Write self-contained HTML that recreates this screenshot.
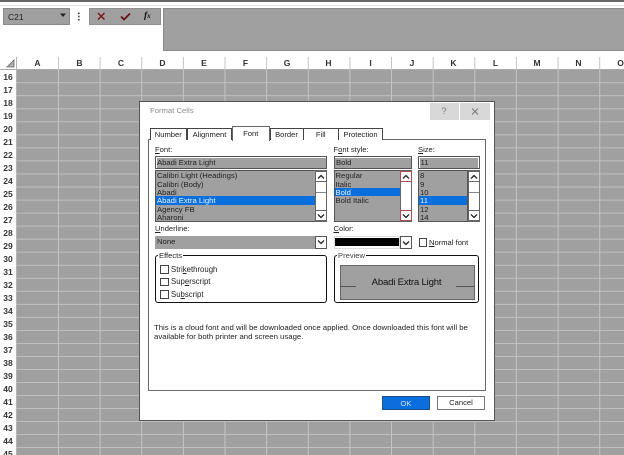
<!DOCTYPE html>
<html><head><meta charset="utf-8"><style>
html,body{margin:0;padding:0;width:624px;height:455px;overflow:hidden;background:#fff}
#r{position:relative;width:624px;height:455px;overflow:hidden;font-family:"Liberation Sans",sans-serif;font-size:7.6px;color:#222;filter:blur(.25px)}
#r div{position:absolute;box-sizing:border-box}
.t{white-space:nowrap;line-height:10px;height:10px}
.c{text-align:center}
.g{background:#a0a0a0}
.h{font-size:8.5px;color:#333;font-weight:bold;top:58px;width:41px;text-align:center;line-height:11px;height:11px}
.n{left:0;width:16px;text-align:center;font-size:8.5px;color:#333;font-weight:bold;line-height:11px;height:11px}
.tab{background:#fff;border:1px solid #444;border-bottom:none;text-align:center;top:127.5px;height:12px;line-height:11.5px;font-size:7.6px}
.li{left:157px;font-size:7.7px;line-height:9px;height:9px;color:#222;white-space:nowrap}
.sb{background:#fff;border:1px solid #666}
.cb{width:8.5px;height:8.5px;border:1px solid #444;background:#fff}
u{text-decoration:underline}
</style></head><body><div id="r">
<div style="left:0;top:0;width:624px;height:2px;background:#666"></div>
<div style="left:0;top:2px;width:624px;height:4px;background:#fff;border-bottom:1px solid #ddd"></div>

<div class="g" style="left:3px;top:8px;width:67px;height:17px;border:1px solid #8a8a8a"></div>
<div class="t" style="left:8px;top:11.5px;font-size:8.5px">C21</div>
<svg style="position:absolute;left:60px;top:13px" width="6" height="5"><path d="M0 0.5H6L3 4z" fill="#222"/></svg>
<svg style="position:absolute;left:77px;top:12px" width="4" height="10"><rect x="1" y="0.5" width="1.6" height="1.6" fill="#444"/><rect x="1" y="3.7" width="1.6" height="1.6" fill="#444"/><rect x="1" y="6.9" width="1.6" height="1.6" fill="#444"/></svg>
<div class="g" style="left:89px;top:8px;width:72px;height:17px;border:1px solid #8f8f8f"></div>
<svg style="position:absolute;left:97px;top:12px" width="9" height="9"><path d="M1 1L7.5 7.5M7.5 1L1 7.5" stroke="#7a1a1a" stroke-width="1.5"/></svg>
<svg style="position:absolute;left:120px;top:12px" width="11" height="9"><path d="M1 4.5L4 7.5L10 1.5" stroke="#6a1010" stroke-width="1.7" fill="none"/></svg>
<div class="t" style="left:144px;top:11px;font-family:'Liberation Serif',serif;font-style:italic;font-weight:bold;font-size:9.5px;color:#111">f<span style="font-size:7px">x</span></div>
<div class="g" style="left:163px;top:8px;width:461px;height:43px;border:1px solid #8a8a8a;border-right:none"></div>

<!-- column headers -->
<svg style="position:absolute;left:0;top:0" width="624" height="455">
<rect x="0" y="69" width="624" height="1.5" fill="#aaa"/>
<rect x="16" y="70" width="608" height="385" fill="#a0a0a0"/>
<g fill="#c4c4c4">
<rect x="16" y="57" width="1" height="398" fill="#b4b4b4"/>
<rect x="58" y="57" width="1" height="398"/><rect x="99.6" y="57" width="1" height="398"/><rect x="141.2" y="57" width="1" height="398"/><rect x="182.9" y="57" width="1" height="398"/><rect x="224.5" y="57" width="1" height="398"/><rect x="266.1" y="57" width="1" height="398"/><rect x="307.8" y="57" width="1" height="398"/><rect x="349.4" y="57" width="1" height="398"/><rect x="391" y="57" width="1" height="398"/><rect x="432.7" y="57" width="1" height="398"/><rect x="474.3" y="57" width="1" height="398"/><rect x="515.9" y="57" width="1" height="398"/><rect x="557.6" y="57" width="1" height="398"/><rect x="599.2" y="57" width="1" height="398"/>
</g>
<g fill="#c0c0c0">
<rect x="0" y="82.2" width="624" height="1"/><rect x="0" y="95.2" width="624" height="1"/><rect x="0" y="108.3" width="624" height="1"/><rect x="0" y="121.3" width="624" height="1"/><rect x="0" y="134.4" width="624" height="1"/><rect x="0" y="147.4" width="624" height="1"/><rect x="0" y="160.4" width="624" height="1"/><rect x="0" y="173.5" width="624" height="1"/><rect x="0" y="186.5" width="624" height="1"/><rect x="0" y="199.6" width="624" height="1"/><rect x="0" y="212.6" width="624" height="1"/><rect x="0" y="225.6" width="624" height="1"/><rect x="0" y="238.7" width="624" height="1"/><rect x="0" y="251.7" width="624" height="1"/><rect x="0" y="264.8" width="624" height="1"/><rect x="0" y="277.8" width="624" height="1"/><rect x="0" y="290.8" width="624" height="1"/><rect x="0" y="303.9" width="624" height="1"/><rect x="0" y="316.9" width="624" height="1"/><rect x="0" y="330" width="624" height="1"/><rect x="0" y="343" width="624" height="1"/><rect x="0" y="356" width="624" height="1"/><rect x="0" y="369" width="624" height="1"/><rect x="0" y="382" width="624" height="1"/><rect x="0" y="395" width="624" height="1"/><rect x="0" y="408" width="624" height="1"/><rect x="0" y="421" width="624" height="1"/><rect x="0" y="434" width="624" height="1"/><rect x="0" y="447" width="624" height="1"/>
</g>
<rect x="0" y="70" width="16" height="385" fill="#fff" opacity=".93"/>
<path d="M14 60V67H7z" fill="#b0b0b0" stroke="#666" stroke-width=".8"/>
</svg>

<div class="h" style="left:17px">A</div><div class="h" style="left:59px">B</div><div class="h" style="left:100.5px">C</div><div class="h" style="left:142px">D</div><div class="h" style="left:183.5px">E</div><div class="h" style="left:225px">F</div><div class="h" style="left:266.5px">G</div><div class="h" style="left:308px">H</div><div class="h" style="left:350px">I</div><div class="h" style="left:391.5px">J</div><div class="h" style="left:433px">K</div><div class="h" style="left:475px">L</div><div class="h" style="left:516.5px">M</div><div class="h" style="left:558px">N</div><div class="h" style="left:600px">O</div>

<div class="n" style="top:71.5px">16</div><div class="n" style="top:84.5px">17</div><div class="n" style="top:97.5px">18</div><div class="n" style="top:110.5px">19</div><div class="n" style="top:123.5px">20</div><div class="n" style="top:136.5px">21</div><div class="n" style="top:149.5px">22</div><div class="n" style="top:162.5px">23</div><div class="n" style="top:175.5px">24</div><div class="n" style="top:188.5px">25</div><div class="n" style="top:201.5px">26</div><div class="n" style="top:214.5px">27</div><div class="n" style="top:227.5px">28</div><div class="n" style="top:240.5px">29</div><div class="n" style="top:253.5px">30</div><div class="n" style="top:266.5px">31</div><div class="n" style="top:279.5px">32</div><div class="n" style="top:292.5px">33</div><div class="n" style="top:305.5px">34</div><div class="n" style="top:318.5px">35</div><div class="n" style="top:331.5px">36</div><div class="n" style="top:345px">37</div><div class="n" style="top:358px">38</div><div class="n" style="top:371px">39</div><div class="n" style="top:384px">40</div><div class="n" style="top:397px">41</div><div class="n" style="top:410px">42</div><div class="n" style="top:423px">43</div><div class="n" style="top:436px">44</div><div class="n" style="top:449px">45</div>

<!-- dialog -->
<div style="left:139px;top:100.5px;width:356px;height:320px;background:#fff;border:1px solid #555"></div>
<div class="t" style="left:150px;top:106px;color:#8a8a8a;font-size:7.7px">Format Cells</div>
<div style="left:429.5px;top:103px;width:29px;height:17px;background:#d8d8d8"></div>
<div class="t c" style="left:429.5px;top:106px;width:29px;color:#777;font-size:9px">?</div>
<div style="left:460px;top:103px;width:29.5px;height:17px;background:#d8d8d8"></div>
<svg style="position:absolute;left:471px;top:108px" width="8" height="7"><path d="M1 .5L7 6.5M7 .5L1 6.5" stroke="#777" stroke-width="1"/></svg>

<!-- panel -->
<div style="left:148px;top:139px;width:337.5px;height:251.5px;background:#fff;border:1px solid #6a6a6a"></div>
<div class="tab" style="left:149.5px;width:37.5px">Number</div>
<div class="tab" style="left:187px;width:45px">Alignment</div>
<div class="tab" style="left:232px;width:37.5px;top:125.5px;height:15px;line-height:13.5px;border-color:#666;z-index:2">Font</div>
<div class="tab" style="left:269.5px;width:34px">Border</div>
<div class="tab" style="left:303px;width:35.5px">Fill</div>
<div class="tab" style="left:338px;width:45px">Protection</div>

<!-- Font -->
<div class="t" style="left:155px;top:145px"><u>F</u>ont:</div>
<div style="left:155px;top:156px;width:172px;height:13px;border:1px solid #555;background:#fff;padding:1px"></div>
<div class="g" style="left:156.5px;top:157.5px;width:169px;height:10px"></div>
<div class="t" style="left:157px;top:158px;font-size:7.7px">Abadi Extra Light</div>
<div class="g" style="left:155px;top:170px;width:161px;height:52px;border:1px solid #555"></div>
<div style="left:156px;top:196px;width:159px;height:8.5px;background:#0a6fdc"></div>
<div class="li" style="top:171px">Calibri Light (Headings)</div>
<div class="li" style="top:179.5px">Calibri (Body)</div>
<div class="li" style="top:188px">Abadi</div>
<div class="li" style="top:196px;color:#eaf2ff">Abadi Extra Light</div>
<div class="li" style="top:204.5px">Agency FB</div>
<div class="li" style="top:213px">Aharoni</div>
<div style="left:315px;top:170px;width:12px;height:52px;background:#fff;border:1px solid #666"></div>
<div class="sb" style="left:315px;top:171px;width:12px;height:11px"></div>
<div style="left:316px;top:191.5px;width:10px;height:1px;background:#888"></div>
<div class="sb" style="left:315px;top:210px;width:12px;height:11px"></div>
<svg style="position:absolute;left:317px;top:173.5px" width="8" height="6"><path d="M1 4.5L4 1.5L7 4.5" stroke="#222" stroke-width="1.3" fill="none"/></svg>
<svg style="position:absolute;left:317px;top:212.5px" width="8" height="6"><path d="M1 1.5L4 4.5L7 1.5" stroke="#222" stroke-width="1.3" fill="none"/></svg>

<!-- Style -->
<div class="t" style="left:333.5px;top:145px">F<u>o</u>nt style:</div>
<div style="left:333.5px;top:156px;width:78.5px;height:13px;border:1px solid #555;background:#fff"></div>
<div class="g" style="left:335px;top:157.5px;width:75.5px;height:10px"></div>
<div class="t" style="left:336px;top:158px;font-size:7.7px">Bold</div>
<div class="g" style="left:333.5px;top:170px;width:67px;height:52px;border:1px solid #555"></div>
<div style="left:334.5px;top:187.5px;width:65px;height:8.5px;background:#0a6fdc"></div>
<div class="li" style="left:335.5px;top:171px">Regular</div>
<div class="li" style="left:335.5px;top:179.5px">Italic</div>
<div class="li" style="left:335.5px;top:187.5px;color:#eaf2ff">Bold</div>
<div class="li" style="left:335.5px;top:196px">Bold Italic</div>
<div style="left:400px;top:170px;width:12px;height:52px;background:#fff;border:1px solid #666"></div>
<div style="left:400px;top:171px;width:12px;height:11px;background:#fff;border:1px solid #b04a50"></div>
<div style="left:400px;top:210px;width:12px;height:11px;background:#fff;border:1px solid #b04a50"></div>
<svg style="position:absolute;left:402px;top:173.5px" width="8" height="6"><path d="M1 4.5L4 1.5L7 4.5" stroke="#222" stroke-width="1.3" fill="none"/></svg>
<svg style="position:absolute;left:402px;top:212.5px" width="8" height="6"><path d="M1 1.5L4 4.5L7 1.5" stroke="#222" stroke-width="1.3" fill="none"/></svg>

<!-- Size -->
<div class="t" style="left:418px;top:145px"><u>S</u>ize:</div>
<div style="left:418px;top:156px;width:61.5px;height:13px;border:1px solid #555;background:#fff"></div>
<div class="g" style="left:419.5px;top:157.5px;width:58.5px;height:10px"></div>
<div class="t" style="left:420.5px;top:158px;font-size:7.7px">11</div>
<div class="g" style="left:418px;top:170px;width:50px;height:52px;border:1px solid #555"></div>
<div style="left:419px;top:196px;width:48px;height:8.5px;background:#0a6fdc"></div>
<div class="li" style="left:420px;top:171px">8</div>
<div class="li" style="left:420px;top:179.5px">9</div>
<div class="li" style="left:420px;top:188px">10</div>
<div class="li" style="left:420px;top:196px;color:#eaf2ff">11</div>
<div class="li" style="left:420px;top:204.5px">12</div>
<div class="li" style="left:420px;top:213px">14</div>
<div style="left:467.5px;top:170px;width:12px;height:52px;background:#fff;border:1px solid #666"></div>
<div class="sb" style="left:467.5px;top:171px;width:12px;height:11px"></div>
<div style="left:468.5px;top:191.5px;width:10px;height:1px;background:#888"></div>
<div class="sb" style="left:467.5px;top:210px;width:12px;height:11px"></div>
<svg style="position:absolute;left:469.5px;top:173.5px" width="8" height="6"><path d="M1 4.5L4 1.5L7 4.5" stroke="#222" stroke-width="1.3" fill="none"/></svg>
<svg style="position:absolute;left:469.5px;top:212.5px" width="8" height="6"><path d="M1 1.5L4 4.5L7 1.5" stroke="#222" stroke-width="1.3" fill="none"/></svg>

<!-- Underline -->
<div class="t" style="left:155px;top:224px"><u>U</u>nderline:</div>
<div class="g" style="left:155px;top:235.5px;width:161px;height:13px"></div>
<div class="t" style="left:157px;top:237px;font-size:7.7px">None</div>
<div style="left:315px;top:235.5px;width:12px;height:13px;background:#fff;border:1px solid #555"></div>
<svg style="position:absolute;left:317px;top:239px" width="8" height="6"><path d="M1 1.5L4 4.5L7 1.5" stroke="#222" stroke-width="1.3" fill="none"/></svg>

<!-- Color -->
<div class="t" style="left:333.5px;top:224px"><u>C</u>olor:</div>
<div style="left:333.5px;top:236px;width:66px;height:13px;background:#fff;border:1px solid #ddd"></div>
<div style="left:335px;top:238px;width:64px;height:8px;background:#000"></div>
<div style="left:400px;top:236px;width:12px;height:13px;background:#fff;border:1px solid #555"></div>
<svg style="position:absolute;left:402px;top:239.5px" width="8" height="6"><path d="M1 1.5L4 4.5L7 1.5" stroke="#222" stroke-width="1.3" fill="none"/></svg>
<div class="cb" style="left:418.5px;top:238px"></div>
<div class="t" style="left:429px;top:237.5px"><u>N</u>ormal font</div>

<!-- Effects -->
<div style="left:154.5px;top:255px;width:172.5px;height:48px;border:1.2px solid #111;border-radius:3px"></div>
<div class="t" style="left:158px;top:251px;background:#fff;padding:0 1px">Effects</div>
<div class="cb" style="left:160px;top:265px"></div>
<div class="t" style="left:171px;top:264.5px;font-size:7.8px">Stri<u>k</u>ethrough</div>
<div class="cb" style="left:160px;top:277.5px"></div>
<div class="t" style="left:171px;top:277px;font-size:7.8px">Sup<u>e</u>rscript</div>
<div class="cb" style="left:160px;top:290px"></div>
<div class="t" style="left:171px;top:289.5px;font-size:7.8px">Su<u>b</u>script</div>

<!-- Preview -->
<div style="left:333.5px;top:255px;width:145.5px;height:48px;border:1.2px solid #111;border-radius:3px"></div>
<div class="t" style="left:337px;top:251px;background:#fff;padding:0 1px;color:#444">Preview</div>
<div class="g" style="left:339.5px;top:264.5px;width:135px;height:35px;border:1px solid #666"></div>
<div style="left:340px;top:285.5px;width:16px;height:1px;background:#555"></div>
<div style="left:456px;top:285.5px;width:18px;height:1px;background:#555"></div>
<div class="t c" style="left:340px;top:278px;width:133px;font-size:9.6px;color:#111;letter-spacing:-.2px">Abadi Extra Light</div>

<!-- Info -->
<div class="t" style="left:154px;top:323px;font-size:7.78px">This is a cloud font and will be downloaded once applied. Once downloaded this font will be</div>
<div class="t" style="left:154px;top:332px;font-size:7.78px">available for both printer and screen usage.</div>

<!-- Buttons -->
<div class="t c" style="left:382px;top:396px;width:48px;height:14px;line-height:13.5px;background:#0a6fdc;border:1px solid #1d4f8f;color:#cfe2fa">OK</div>
<div class="t c" style="left:437px;top:396px;width:48px;height:14px;line-height:12.5px;background:#fff;border:1px solid #777;color:#222">Cancel</div>
</div></body></html>
